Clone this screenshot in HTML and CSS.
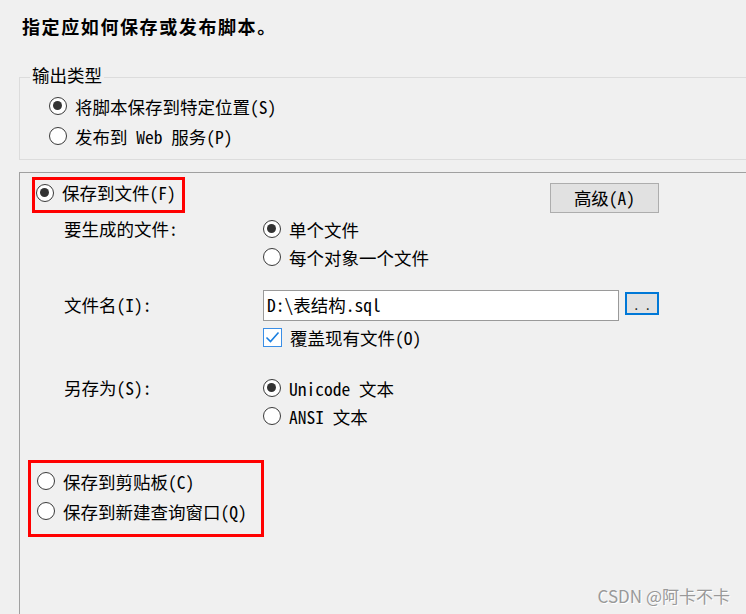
FILE: index.html
```html
<!DOCTYPE html>
<html lang="zh-CN">
<head>
<meta charset="utf-8">
<title>脚本选项</title>
<link rel="stylesheet" href="styles.css">
</head>
<body>
<div class="page">
  <h1 class="title">指定应如何保存或发布脚本。</h1>

  <fieldset class="group">
    <legend class="group-legend">输出类型</legend>
    <div class="opt opt-30"><span class="radio on"></span><span>将脚本保存到特定位置(S)</span></div>
    <div class="opt opt-30"><span class="radio"></span><span>发布到 Web 服务(P)</span></div>
  </fieldset>

  <section class="panel">
    <div class="top-row">
      <div class="mark mark-file">
        <div class="opt opt-25"><span class="radio on"></span><span>保存到文件(F)</span></div>
      </div>
      <button class="btn btn-adv">高级(A)</button>
    </div>

    <div class="field field-gen">
      <div class="label">要生成的文件:</div>
      <div class="stack">
        <div class="opt opt-28"><span class="radio on"></span><span>单个文件</span></div>
        <div class="opt opt-28"><span class="radio"></span><span>每个对象一个文件</span></div>
      </div>
    </div>

    <div class="field field-name">
      <div class="label label-name">文件名(I):</div>
      <div class="file-row">
        <div class="textbox">D:\表结构.sql</div>
        <button class="btn btn-browse">..</button>
      </div>
    </div>

    <div class="field field-check">
      <div></div>
      <div class="opt opt-28">
        <span class="check"><svg width="19" height="19" viewBox="0 0 19 19"><rect x="0.5" y="0.5" width="18" height="18" fill="#fff" stroke="#3a8ee6"/><polyline points="3.5,9.5 7.5,13.5 15.5,4.5" fill="none" stroke="#1a7fe0" stroke-width="1.6"/></svg></span>
        <span>覆盖现有文件(O)</span>
      </div>
    </div>

    <div class="field field-enc">
      <div class="label">另存为(S):</div>
      <div class="stack">
        <div class="opt opt-28"><span class="radio on"></span><span>Unicode 文本</span></div>
        <div class="opt opt-28"><span class="radio"></span><span>ANSI 文本</span></div>
      </div>
    </div>

    <div class="mark mark-dest">
      <div class="opt opt-30"><span class="radio"></span><span>保存到剪贴板(C)</span></div>
      <div class="opt opt-30"><span class="radio"></span><span>保存到新建查询窗口(Q)</span></div>
    </div>
  </section>

  <div class="watermark">CSDN @阿卡不卡</div>
</div>
</body>
</html>
```

FILE: styles.css
```css
html, body {
  margin: 0;
  padding: 0;
  background: #f0f0f0;
}

.page {
  position: relative;
  width: 746px;
  height: 614px;
  overflow: hidden;
  background: #f0f0f0;
  color: #000;
  font-family: "Noto Sans Mono CJK SC", "Noto Sans CJK SC", sans-serif;
  font-size: 17.5px;
}

.title {
  margin: 0;
  padding: 13px 0 0 22px;
  font-size: 18px;
  line-height: 26px;
  font-weight: bold;
  letter-spacing: 1.6px;
}

.group {
  margin: 26px 0 0 19px;
  width: 760px;
  padding: 2px 0 8px 29px;
  border: 1px solid #dcdcdc;
  box-sizing: border-box;
}

.group-legend {
  margin-left: -19px;
  padding: 0 2px 4px 2px;
  line-height: 20px;
}

.opt {
  display: flex;
  align-items: center;
  gap: 8px;
  white-space: nowrap;
}

.opt-25 { height: 25px; }
.opt-28 { height: 28px; }
.opt-30 { height: 30px; }

.radio {
  flex: none;
  position: relative;
  width: 18px;
  height: 18px;
  box-sizing: border-box;
  border: 1.5px solid #3a3a3a;
  border-radius: 50%;
  background: #fff;
}

.radio.on::after {
  content: "";
  position: absolute;
  left: 3px;
  top: 3px;
  width: 9px;
  height: 9px;
  border-radius: 50%;
  background: #333;
}

.check {
  flex: none;
  display: flex;
  width: 19px;
  height: 19px;
}

.panel {
  margin: 12px 0 0 19px;
  width: 760px;
  height: 600px;
  padding-top: 4px;
  border-top: 1px solid #a0a0a0;
  border-left: 1px solid #a0a0a0;
  box-sizing: border-box;
}

.top-row {
  display: flex;
  justify-content: space-between;
  align-items: flex-end;
  margin-left: 12px;
  width: 627px;
}

.mark {
  border: 3px solid #f00;
  box-sizing: border-box;
}

.mark-file {
  width: 153px;
  height: 36px;
  padding: 0 0 5px 1px;
}

.btn {
  font: inherit;
  color: #000;
  background: #e1e1e1;
  border: 1px solid #adadad;
  box-sizing: border-box;
  padding: 0;
  margin: 0;
}

.btn-adv {
  width: 109px;
  height: 30px;
  line-height: 26px;
}

.field {
  display: grid;
  grid-template-columns: 199px 1fr;
  margin-left: 44px;
}

.field-gen { margin-top: 2px; }
.field-name { margin-top: 19px; }
.field-check { margin-top: 2px; }
.field-enc { margin-top: 23px; }

.label {
  line-height: 28px;
  white-space: nowrap;
}

.label-name { line-height: 29px; }

.stack {
  display: flex;
  flex-direction: column;
}

.file-row {
  display: flex;
  align-items: flex-start;
  gap: 6px;
}

.textbox {
  width: 356px;
  height: 31px;
  box-sizing: border-box;
  border: 1px solid #9a9a9a;
  background: #fff;
  padding-left: 3px;
  line-height: 27px;
  white-space: nowrap;
}

.btn-browse {
  margin-top: 2px;
  width: 34px;
  height: 23px;
  border: 2px solid #0078d7;
  font-size: 13px;
  line-height: 14px;
  letter-spacing: 5px;
  padding: 0 0 1px 5px;
  display: flex;
  justify-content: center;
  align-items: flex-end;
}

.mark-dest {
  margin: 30px 0 0 8px;
  width: 236px;
  padding: 3px 0 8px 6px;
  box-sizing: border-box;
}

.watermark {
  position: absolute;
  right: 16px;
  bottom: 8px;
  font-family: "Noto Sans CJK SC", sans-serif;
  font-size: 17px;
  line-height: 20px;
  color: #999;
  text-shadow: 1px 1px 0 #fff;
}
```
